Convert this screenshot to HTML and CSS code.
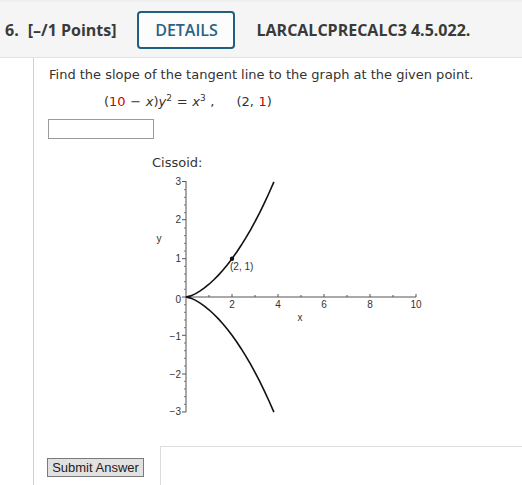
FILE: index.html
```html
<!DOCTYPE html>
<html>
<head>
<meta charset="utf-8">
<link rel="stylesheet" href="styles.css">
</head>
<body>
<header class="qhead">
  <span class="qnum">6.</span>
  <span class="qpoints">[–/1 Points]</span>
  <button class="details">DETAILS</button>
  <span class="qcode">LARCALCPRECALC3 4.5.022.</span>
</header>
<main class="qbody">
  <p class="prompt">Find the slope of the tangent line to the graph at the given point.</p>
  <p class="eq">(<span class="red">10</span> − <i>x</i>)<i>y</i><sup>2</sup> = <i>x</i><sup>3</sup> ,<span class="sp"></span>(2, <span class="red">1</span>)</p>
  <input class="answer" type="text">
  <p class="caption">Cissoid:</p>
  <svg class="plot" width="300" height="250" viewBox="0 0 300 250">
    <g transform="translate(-140,-171)" font-family="Liberation Sans, Arial, sans-serif" font-size="10" fill="#333">
      <line x1="186" y1="181" x2="186" y2="412" stroke="#555" stroke-width="1"/>
      <line x1="186" y1="297" x2="416" y2="297" stroke="#555" stroke-width="1"/>
      <path d="M184 189.7h2M184 197.3h2M184 205h2M184 212.7h2M184 228h2M184 235.7h2M184 243.3h2M184 251h2M184 266.3h2M184 274h2M184 281.7h2M184 289.3h2M184 304.7h2M184 312.3h2M184 320h2M184 327.7h2M184 343h2M184 350.7h2M184 358.3h2M184 366h2M184 381.3h2M184 389h2M184 396.7h2M184 404.3h2" stroke="#777" stroke-width="1"/>
      <path d="M182 181.5h4M182 219.7h4M182 258.7h4M182 297h4M182 335.3h4M182 374h4M182 412h4" stroke="#555" stroke-width="1"/>
      <path d="M232 297v-3M278 297v-3M324 297v-3M370 297v-3M416 297v-3M209 297v-2M255 297v-2M301 297v-2M347 297v-2M393 297v-2" stroke="#555" stroke-width="1"/>
      <g text-anchor="end">
        <text x="181" y="185">3</text>
        <text x="181" y="223">2</text>
        <text x="181" y="262">1</text>
        <text x="181" y="303">0</text>
        <text x="181" y="340">−1</text>
        <text x="181" y="378">−2</text>
        <text x="181" y="415">−3</text>
      </g>
      <g text-anchor="middle">
        <text x="232" y="308">2</text>
        <text x="278" y="308">4</text>
        <text x="324" y="308">6</text>
        <text x="370" y="308">8</text>
        <text x="416" y="308">10</text>
        <text x="300" y="321">x</text>
        <text x="159" y="242">y</text>
      </g>
      <polyline fill="none" stroke="#111" stroke-width="1.6" points="186,297 190.6,295.9 195.2,293.87 199.8,291.19 204.4,287.96 209,284.22 213.6,280.02 218.2,275.35 222.8,270.23 227.4,264.68 232,258.67 236.6,252.21 241.2,245.3 245.8,237.93 250.4,230.07 255,221.72 259.6,212.86 264.2,203.46 268.8,193.51 273.9,181.9"/>
      <polyline fill="none" stroke="#111" stroke-width="1.6" points="186,297 190.6,298.1 195.2,300.13 199.8,302.81 204.4,306.04 209,309.78 213.6,313.98 218.2,318.65 222.8,323.77 227.4,329.32 232,335.33 236.6,341.79 241.2,348.7 245.8,356.07 250.4,363.93 255,372.28 259.6,381.14 264.2,390.54 268.8,400.49 273.9,412.1"/>
      <circle cx="232" cy="258.7" r="2.2" fill="#111"/>
      <text x="230" y="270">(2, 1)</text>
    </g>
  </svg>
  <div class="submit-row">
    <button class="submit">Submit Answer</button>
    <div class="resp"></div>
  </div>
</main>
</body>
</html>
```
FILE: styles.css
```css
html, body {
  margin: 0;
  padding: 0;
  background: #fff;
}
body {
  width: 522px;
  height: 485px;
  overflow: hidden;
}
.qhead {
  background: #f5f5f5;
  border-bottom: 1px solid #e2e2e2;
  border-top: 2px solid #f0f0f0;
  box-sizing: border-box;
  height: 58px;
  display: flex;
  align-items: center;
  padding-left: 5px;
  font-family: "Open Sans", "Noto Sans", sans-serif;
  font-size: 16px;
  font-weight: 700;
  color: #3a3a3a;
}
.qpoints {
  margin-left: 9px;
}
.details {
  margin-left: 21px;
  width: 98px;
  height: 38px;
  border: 2px solid #1f5f7f;
  border-radius: 4px;
  background: #fcfcfc;
  color: #2b6284;
  font-family: "Open Sans", "Noto Sans", sans-serif;
  font-size: 16px;
  font-weight: 600;
  padding: 0;
}
.qcode {
  margin-left: 21px;
}
.qbody {
  margin-left: 33px;
  border-left: 1px solid #d0d0d0;
  padding-left: 15px;
  padding-top: 9px;
  height: 427px;
  box-sizing: border-box;
  font-family: "DejaVu Sans", Verdana, sans-serif;
  font-size: 13px;
  color: #333;
}
.prompt {
  margin: 0;
  line-height: 16px;
}
.eq {
  margin: 11px 0 0 55px;
  line-height: 16px;
  word-spacing: 0.5px;
}
.eq sup {
  font-size: 9px;
  line-height: 0;
}
.red {
  color: #cc0000;
}
.sp {
  display: inline-block;
  width: 22px;
}
.answer {
  display: block;
  margin: 9px 0 0 -1px;
  width: 106px;
  height: 20px;
  box-sizing: border-box;
  border: 1px solid #9a9a9a;
  padding: 0;
}
.caption {
  margin: 16px 0 0 103px;
  line-height: 16px;
}
.plot {
  display: block;
  margin-left: 91px;
}
.submit-row {
  display: flex;
  align-items: flex-start;
  margin-top: 25px;
}
.submit {
  margin: 12px 0 0 -2px;
  width: 97px;
  height: 19px;
  padding: 0;
  font-family: "Liberation Sans", Arial, sans-serif;
  font-size: 13px;
  color: #222;
  background: #e1e1e1;
  border: 1px solid #7a7a7a;
  border-radius: 0;
}
.resp {
  flex: 1;
  margin-left: 16px;
  height: 60px;
  border-top: 1px solid #dcdcdc;
  border-left: 1px solid #dcdcdc;
}
```
